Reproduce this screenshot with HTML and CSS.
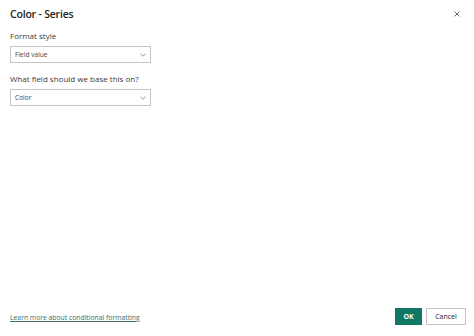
FILE: index.html
```html
<!DOCTYPE html>
<html lang="en">
<head>
    <meta charset="UTF-8">
    <title>Color - Series</title>
    <link rel="stylesheet" href="styles.css">
</head>
<body>
<div class="dialog">
    <div class="dialogHead">
        <span class="dialogTitle">Color - Series</span>
        <button class="closeBtn" aria-label="Close">
            <svg width="6" height="6" viewBox="0 0 6 6">
                <path d="M0.5 0.5 L5.5 5.5 M5.5 0.5 L0.5 5.5" stroke="#605e5c" stroke-width="0.9" fill="none"/>
            </svg>
        </button>
    </div>

    <div class="dialogBody">
        <div class="field">
            <span class="fieldLabel">Format style</span>
            <div class="dropdown">
                <span>Field value</span>
                <svg class="chevron" width="6" height="4" viewBox="0 0 6 4">
                    <path d="M0.5 0.8 L3 3.2 L5.5 0.8" stroke="#8a8886" stroke-width="0.9" fill="none"/>
                </svg>
            </div>
        </div>
        <div class="field">
            <span class="fieldLabel">What field should we base this on?</span>
            <div class="dropdown">
                <span>Color</span>
                <svg class="chevron" width="6" height="4" viewBox="0 0 6 4">
                    <path d="M0.5 0.8 L3 3.2 L5.5 0.8" stroke="#8a8886" stroke-width="0.9" fill="none"/>
                </svg>
            </div>
        </div>
    </div>

    <div class="dialogFoot">
        <a class="learnLink" href="#">Learn more about conditional formatting</a>
        <div class="buttons">
            <button class="okBtn">OK</button>
            <button class="cancelBtn">Cancel</button>
        </div>
    </div>
</div>
</body>
</html>
```

FILE: styles.css
```css
html, body {
    margin: 0;
    padding: 0;
    background: #ffffff;
}

.dialog {
    width: 474px;
    height: 336px;
    box-sizing: border-box;
    padding: 0 8px 0 10px;
    display: flex;
    flex-direction: column;
    font-family: "Open Sans", "Noto Sans", sans-serif;
    color: #252423;
}

.dialogHead {
    display: flex;
    justify-content: space-between;
    align-items: center;
    height: 28px;
}

.dialogTitle {
    font-size: 10.5px;
    font-weight: 600;
    letter-spacing: -0.2px;
}

.closeBtn {
    border: none;
    background: none;
    padding: 0;
    width: 16px;
    height: 16px;
    display: flex;
    align-items: center;
    justify-content: center;
    margin-right: 1px;
}

.dialogBody {
    flex: 1;
}

.field {
    display: flex;
    flex-direction: column;
    margin-bottom: 8px;
}

.fieldLabel {
    font-size: 8px;
    color: #3b3a39;
    line-height: 14px;
    margin-top: 1px;
    margin-bottom: 3px;
}

.dropdown {
    width: 141px;
    height: 17px;
    box-sizing: border-box;
    border: 1px solid #c8c6c4;
    display: flex;
    align-items: center;
    justify-content: space-between;
    padding: 0 4px 0 4px;
    font-size: 6.6px;
    color: #484644;
}

.chevron {
    display: block;
}

.dialogFoot {
    display: flex;
    justify-content: space-between;
    align-items: center;
    height: 17px;
    margin-bottom: 11px;
}

.learnLink {
    font-size: 6.8px;
    color: #3c6e66;
    text-decoration: underline;
    margin-top: 2px;
}

.buttons {
    display: flex;
    gap: 4px;
}

.okBtn, .cancelBtn {
    height: 17px;
    box-sizing: border-box;
    font-family: "Open Sans", "Noto Sans", sans-serif;
    font-size: 7px;
    padding: 0;
}

.okBtn {
    width: 27px;
    background: #117865;
    border: 1px solid #117865;
    color: #ffffff;
    font-weight: 700;
}

.cancelBtn {
    width: 40px;
    background: #ffffff;
    border: 1px solid #c8c6c4;
    color: #252423;
}
```
